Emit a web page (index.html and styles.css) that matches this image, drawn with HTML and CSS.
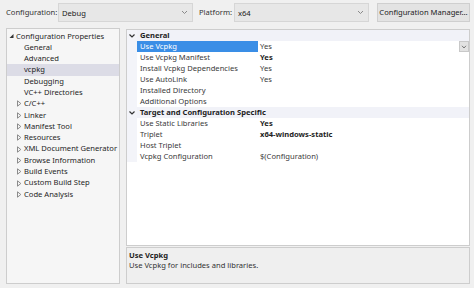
FILE: index.html
```html
<!DOCTYPE html>
<html>
<head>
<meta charset="utf-8">
<link rel="stylesheet" href="styles.css">
</head>
<body>
<div class="window">
  <div class="topbar">
    <span class="label label-config">Configuration:</span>
    <div class="combo combo-config"><span>Debug</span><svg class="chev" width="7" height="5" viewBox="0 0 7 5"><polyline points="1,1 3.5,3.5 6,1" fill="none" stroke="#8a8a8a" stroke-width="1"/></svg></div>
    <span class="label label-platform">Platform:</span>
    <div class="combo combo-platform"><span>x64</span><svg class="chev" width="7" height="5" viewBox="0 0 7 5"><polyline points="1,1 3.5,3.5 6,1" fill="none" stroke="#8a8a8a" stroke-width="1"/></svg></div>
    <div class="button">Configuration Manager...</div>
  </div>
  <div class="main">
    <div class="tree">
      <div class="node root"><svg class="exp" width="8" height="6" viewBox="0 0 8 6"><polygon points="1.5,5 5.5,5 5.5,1" fill="#333"/></svg><span>Configuration Properties</span></div>
      <div class="node child"><span class="exp"></span><span>General</span></div>
      <div class="node child"><span class="exp"></span><span>Advanced</span></div>
      <div class="node child selected"><span class="exp"></span><span>vcpkg</span></div>
      <div class="node child"><span class="exp"></span><span>Debugging</span></div>
      <div class="node child"><span class="exp"></span><span>VC++ Directories</span></div>
      <div class="node sub"><svg class="exp" width="8" height="7" viewBox="0 0 8 7"><polygon points="1.5,0.8 4.8,3.5 1.5,6.2" fill="none" stroke="#808080" stroke-width="0.9"/></svg><span>C/C++</span></div>
      <div class="node sub"><svg class="exp" width="8" height="7" viewBox="0 0 8 7"><polygon points="1.5,0.8 4.8,3.5 1.5,6.2" fill="none" stroke="#808080" stroke-width="0.9"/></svg><span>Linker</span></div>
      <div class="node sub"><svg class="exp" width="8" height="7" viewBox="0 0 8 7"><polygon points="1.5,0.8 4.8,3.5 1.5,6.2" fill="none" stroke="#808080" stroke-width="0.9"/></svg><span>Manifest Tool</span></div>
      <div class="node sub"><svg class="exp" width="8" height="7" viewBox="0 0 8 7"><polygon points="1.5,0.8 4.8,3.5 1.5,6.2" fill="none" stroke="#808080" stroke-width="0.9"/></svg><span>Resources</span></div>
      <div class="node sub"><svg class="exp" width="8" height="7" viewBox="0 0 8 7"><polygon points="1.5,0.8 4.8,3.5 1.5,6.2" fill="none" stroke="#808080" stroke-width="0.9"/></svg><span>XML Document Generator</span></div>
      <div class="node sub"><svg class="exp" width="8" height="7" viewBox="0 0 8 7"><polygon points="1.5,0.8 4.8,3.5 1.5,6.2" fill="none" stroke="#808080" stroke-width="0.9"/></svg><span>Browse Information</span></div>
      <div class="node sub"><svg class="exp" width="8" height="7" viewBox="0 0 8 7"><polygon points="1.5,0.8 4.8,3.5 1.5,6.2" fill="none" stroke="#808080" stroke-width="0.9"/></svg><span>Build Events</span></div>
      <div class="node sub"><svg class="exp" width="8" height="7" viewBox="0 0 8 7"><polygon points="1.5,0.8 4.8,3.5 1.5,6.2" fill="none" stroke="#808080" stroke-width="0.9"/></svg><span>Custom Build Step</span></div>
      <div class="node sub"><svg class="exp" width="8" height="7" viewBox="0 0 8 7"><polygon points="1.5,0.8 4.8,3.5 1.5,6.2" fill="none" stroke="#808080" stroke-width="0.9"/></svg><span>Code Analysis</span></div>
    </div>
    <div class="right">
      <div class="grid">
        <div class="row header"><div class="margin"><svg width="8" height="6" viewBox="0 0 8 6"><polyline points="1.5,1.5 4,4 6.5,1.5" fill="none" stroke="#333" stroke-width="1.2"/></svg></div><div class="hname">General</div></div>
        <div class="row"><div class="margin"></div><div class="name sel">Use Vcpkg</div><div class="value"><span>Yes</span><span class="ddbtn"><svg width="6" height="4" viewBox="0 0 6 4"><polyline points="1,0.8 3,3 5,0.8" fill="none" stroke="#777" stroke-width="1"/></svg></span></div></div>
        <div class="row"><div class="margin"></div><div class="name">Use Vcpkg Manifest</div><div class="value bold">Yes</div></div>
        <div class="row"><div class="margin"></div><div class="name">Install Vcpkg Dependencies</div><div class="value">Yes</div></div>
        <div class="row"><div class="margin"></div><div class="name">Use AutoLink</div><div class="value">Yes</div></div>
        <div class="row"><div class="margin"></div><div class="name">Installed Directory</div><div class="value"></div></div>
        <div class="row"><div class="margin"></div><div class="name">Additional Options</div><div class="value"></div></div>
        <div class="row header"><div class="margin"><svg width="8" height="6" viewBox="0 0 8 6"><polyline points="1.5,1.5 4,4 6.5,1.5" fill="none" stroke="#333" stroke-width="1.2"/></svg></div><div class="hname">Target and Configuration Specific</div></div>
        <div class="row"><div class="margin"></div><div class="name">Use Static Libraries</div><div class="value bold">Yes</div></div>
        <div class="row"><div class="margin"></div><div class="name">Triplet</div><div class="value bold">x64-windows-static</div></div>
        <div class="row"><div class="margin"></div><div class="name">Host Triplet</div><div class="value"></div></div>
        <div class="row"><div class="margin"></div><div class="name">Vcpkg Configuration</div><div class="value">$(Configuration)</div></div>
      </div>
      <div class="desc">
        <div class="desc-title">Use Vcpkg</div>
        <div class="desc-text">Use Vcpkg for includes and libraries.</div>
      </div>
    </div>
  </div>
</div>
</body>
</html>
```

FILE: styles.css
```css
html, body {
  margin: 0;
  padding: 0;
}
body {
  background: #f0f0f0;
  font-family: "Noto Sans", "Open Sans", sans-serif;
  font-size: 7.6px;
  color: #1e1e1e;
}
.window {
  width: 474px;
  height: 288px;
  display: flex;
  flex-direction: column;
  overflow: hidden;
}
.topbar {
  height: 28px;
  display: flex;
  align-items: flex-start;
  padding: 3px 4px 0 6px;
  box-sizing: border-box;
}
.label {
  height: 19px;
  line-height: 19px;
  color: #333;
  white-space: nowrap;
}
.label-config { width: 52px; }
.label-platform { width: 35px; }
.combo {
  width: 135px;
  height: 19px;
  box-sizing: border-box;
  background: #e7e7e7;
  border: 1px solid #d6d6d6;
  display: flex;
  align-items: center;
  justify-content: space-between;
  padding: 0 4px 0 3px;
  color: #222;
}
.combo-config { margin-right: 6px; }
.combo-platform { margin-right: 8px; }
.button {
  width: 93px;
  height: 19px;
  box-sizing: border-box;
  background: #e3e3e3;
  border: 1px solid #cfcfcf;
  line-height: 17px;
  text-align: center;
  color: #222;
  white-space: nowrap;
}
.main {
  flex: 1;
  display: flex;
  padding: 0 4px 4px 6px;
  gap: 6px;
  min-height: 0;
}
.tree {
  width: 114px;
  box-sizing: border-box;
  border: 1px solid #cdcdcd;
  background: #f6f6f6;
  padding-top: 1.5px;
}
.node {
  height: 11.3px;
  line-height: 11.3px;
  display: flex;
  align-items: center;
  white-space: nowrap;
  color: #1e1e1e;
}
.node .exp {
  width: 8px;
  flex: none;
  display: block;
}
.node.root { padding-left: 1px; }
.node.child, .node.sub { padding-left: 9px; }
.node.selected { background: #dcdce6; }
.right {
  flex: 1;
  display: flex;
  flex-direction: column;
  min-width: 0;
  padding-top: 1px;
}
.grid {
  flex: 1;
  border: 1px solid #cdcdcd;
  background: #ffffff;
  box-sizing: border-box;
}
.row {
  height: 11px;
  line-height: 11px;
  display: flex;
  white-space: nowrap;
}
.margin {
  width: 10px;
  flex: none;
  background: #f3f4f9;
  display: flex;
  align-items: center;
  justify-content: center;
}
.row.header { background: #f1f2f8; }
.hname {
  padding-left: 3px;
  font-weight: bold;
  color: #1e1e1e;
}
.name {
  width: 121px;
  flex: none;
  box-sizing: border-box;
  padding-left: 3px;
  color: #3a3a3a;
  overflow: hidden;
}
.name.sel {
  background: #3a8ee6;
  color: #ffffff;
}
.value {
  flex: 1;
  padding-left: 2px;
  color: #3a3a3a;
  display: flex;
  justify-content: space-between;
  align-items: center;
}
.value.bold {
  font-weight: bold;
  color: #1e1e1e;
}
.ddbtn {
  width: 10px;
  height: 11px;
  box-sizing: border-box;
  background: #e2e2e2;
  border: 1px solid #c8c8c8;
  display: flex;
  align-items: center;
  justify-content: center;
}
.desc {
  height: 37px;
  margin-top: 1px;
  box-sizing: border-box;
  border: 1px solid #cdcdcd;
  background: #efefef;
  padding: 2px 2px 0 2px;
}
.desc-title {
  font-weight: bold;
  line-height: 10px;
  color: #1e1e1e;
}
.desc-text {
  line-height: 11px;
  color: #333;
}
```
